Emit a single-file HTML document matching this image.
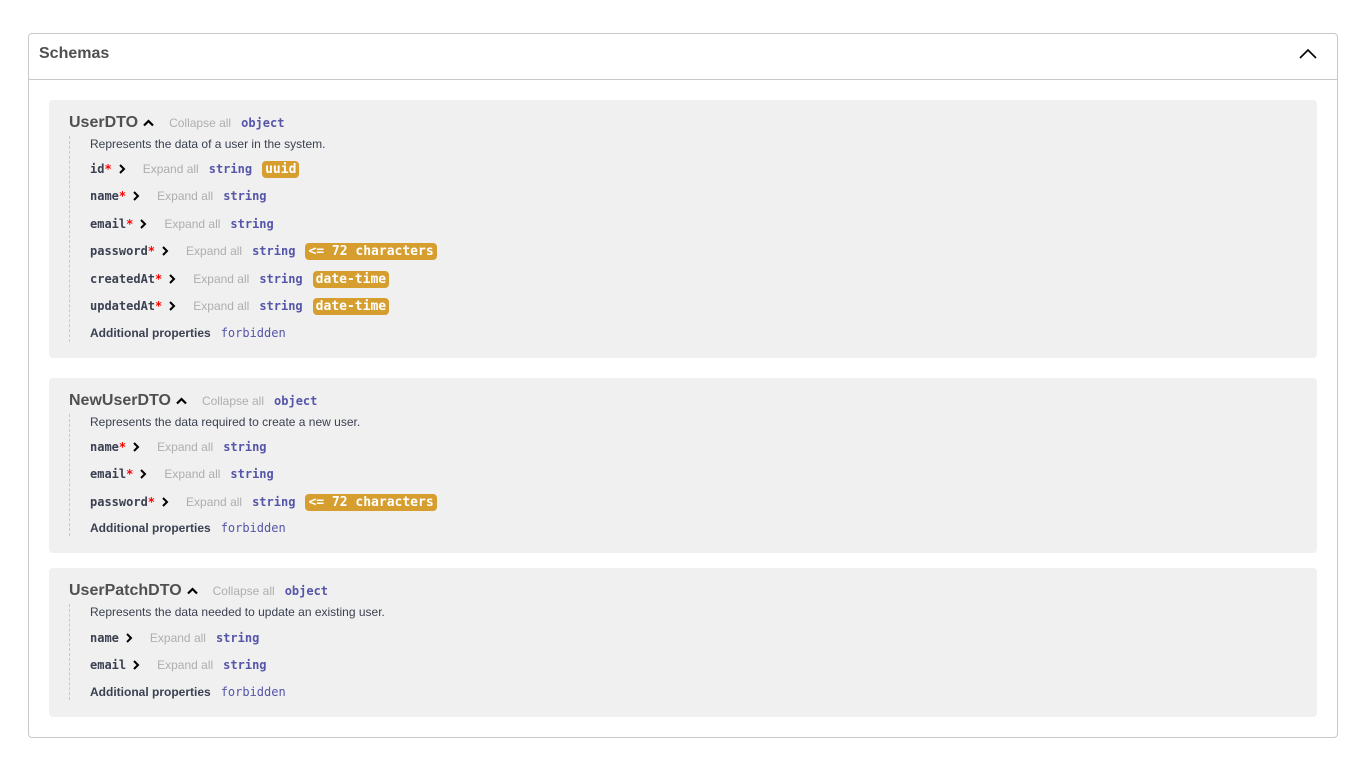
<!DOCTYPE html>
<html><head><meta charset="utf-8"><style>
body{margin:0;background:#fff;font-family:"Liberation Sans",sans-serif;}
.outer{position:absolute;left:28px;top:33px;width:1308px;height:703px;border:1px solid #c8c8c8;border-radius:4px;}
.hdr{position:absolute;left:0;top:0;width:100%;height:45px;border-bottom:1px solid #c8c8c8;}
.hdr .t{position:absolute;left:10px;top:11px;font-size:16px;font-weight:bold;color:#505050;}
.hdr svg{position:absolute;right:20px;top:14px;}
.box{position:absolute;left:20px;width:1268px;background:#f0f0f0;border-radius:4px;}
.dash{position:absolute;left:20px;border-left:1px dashed #c8c8c8;}
.row{position:absolute;left:41px;height:18px;line-height:18px;display:flex;align-items:center;white-space:nowrap;}
.title{left:20px;height:20px;line-height:20px;}
.title .n{font-size:16px;font-weight:bold;color:#505050;}
.m{font-family:"DejaVu Sans Mono",monospace;font-size:12px;font-weight:bold;color:#3b4151;}
.req{color:#f00;}
.ex{font-size:12px;color:#afaeae;margin-left:17px;}
.ty{font-family:"DejaVu Sans Mono",monospace;font-size:12px;font-weight:bold;color:#55a;margin-left:10px;}
.bd{font-family:"DejaVu Sans Mono",monospace;font-size:13px;font-weight:bold;color:#fff;background:#d69e2e;border-radius:4px;padding:0 3px;margin-left:10px;line-height:17px;}
.desc{font-size:12px;color:#3b4151;}
.ap{font-size:12px;font-weight:bold;color:#3b4151;}
.fb{font-family:"DejaVu Sans Mono",monospace;font-size:12px;color:#55a;margin-left:10px;}
.cr{margin-left:6px;}
.cu{margin-left:5px;}
.title .ex{margin-left:15px;}
</style></head><body>
<div class="outer">
<div class="hdr"><span class="t">Schemas</span><svg width="18" height="12" viewBox="0 0 18 12"><path d="M1 10 L9 2 L17 10" fill="none" stroke="#000" stroke-width="1.6"/></svg></div>

<div class="box" style="top:66px;height:258px;">
<div class="dash" style="top:36px;height:206px;"></div>
<div class="row title" style="top:13px;"><span class="n">UserDTO</span><svg class="cu" width="11" height="8" viewBox="0 0 11 8"><path d="M1 6.5 L5.5 2 L10 6.5" fill="none" stroke="#000" stroke-width="2.2"/></svg><span class="ex">Collapse all</span><span class="ty">object</span></div>
<div class="row" style="top:35px;"><span class="desc">Represents the data of a user in the system.</span></div>
<div class="row" style="top:60px;"><span class="m">id<span class="req">*</span></span><svg class="cr" width="8" height="10" viewBox="0 0 8 10"><path d="M2 1 L6 5 L2 9" fill="none" stroke="#000" stroke-width="2"/></svg><span class="ex">Expand all</span><span class="ty">string</span><span class="bd">uuid</span></div>
<div class="row" style="top:87px;"><span class="m">name<span class="req">*</span></span><svg class="cr" width="8" height="10" viewBox="0 0 8 10"><path d="M2 1 L6 5 L2 9" fill="none" stroke="#000" stroke-width="2"/></svg><span class="ex">Expand all</span><span class="ty">string</span></div>
<div class="row" style="top:115px;"><span class="m">email<span class="req">*</span></span><svg class="cr" width="8" height="10" viewBox="0 0 8 10"><path d="M2 1 L6 5 L2 9" fill="none" stroke="#000" stroke-width="2"/></svg><span class="ex">Expand all</span><span class="ty">string</span></div>
<div class="row" style="top:142px;"><span class="m">password<span class="req">*</span></span><svg class="cr" width="8" height="10" viewBox="0 0 8 10"><path d="M2 1 L6 5 L2 9" fill="none" stroke="#000" stroke-width="2"/></svg><span class="ex">Expand all</span><span class="ty">string</span><span class="bd">&lt;= 72 characters</span></div>
<div class="row" style="top:170px;"><span class="m">createdAt<span class="req">*</span></span><svg class="cr" width="8" height="10" viewBox="0 0 8 10"><path d="M2 1 L6 5 L2 9" fill="none" stroke="#000" stroke-width="2"/></svg><span class="ex">Expand all</span><span class="ty">string</span><span class="bd">date-time</span></div>
<div class="row" style="top:197px;"><span class="m">updatedAt<span class="req">*</span></span><svg class="cr" width="8" height="10" viewBox="0 0 8 10"><path d="M2 1 L6 5 L2 9" fill="none" stroke="#000" stroke-width="2"/></svg><span class="ex">Expand all</span><span class="ty">string</span><span class="bd">date-time</span></div>
<div class="row" style="top:224px;"><span class="ap">Additional properties</span><span class="fb">forbidden</span></div>
</div>

<div class="box" style="top:344px;height:175px;">
<div class="dash" style="top:36px;height:122px;"></div>
<div class="row title" style="top:13px;"><span class="n">NewUserDTO</span><svg class="cu" width="11" height="8" viewBox="0 0 11 8"><path d="M1 6.5 L5.5 2 L10 6.5" fill="none" stroke="#000" stroke-width="2.2"/></svg><span class="ex">Collapse all</span><span class="ty">object</span></div>
<div class="row" style="top:35px;"><span class="desc">Represents the data required to create a new user.</span></div>
<div class="row" style="top:60px;"><span class="m">name<span class="req">*</span></span><svg class="cr" width="8" height="10" viewBox="0 0 8 10"><path d="M2 1 L6 5 L2 9" fill="none" stroke="#000" stroke-width="2"/></svg><span class="ex">Expand all</span><span class="ty">string</span></div>
<div class="row" style="top:87px;"><span class="m">email<span class="req">*</span></span><svg class="cr" width="8" height="10" viewBox="0 0 8 10"><path d="M2 1 L6 5 L2 9" fill="none" stroke="#000" stroke-width="2"/></svg><span class="ex">Expand all</span><span class="ty">string</span></div>
<div class="row" style="top:115px;"><span class="m">password<span class="req">*</span></span><svg class="cr" width="8" height="10" viewBox="0 0 8 10"><path d="M2 1 L6 5 L2 9" fill="none" stroke="#000" stroke-width="2"/></svg><span class="ex">Expand all</span><span class="ty">string</span><span class="bd">&lt;= 72 characters</span></div>
<div class="row" style="top:141px;"><span class="ap">Additional properties</span><span class="fb">forbidden</span></div>
</div>

<div class="box" style="top:534px;height:149px;">
<div class="dash" style="top:36px;height:96px;"></div>
<div class="row title" style="top:13px;"><span class="n">UserPatchDTO</span><svg class="cu" width="11" height="8" viewBox="0 0 11 8"><path d="M1 6.5 L5.5 2 L10 6.5" fill="none" stroke="#000" stroke-width="2.2"/></svg><span class="ex">Collapse all</span><span class="ty">object</span></div>
<div class="row" style="top:35px;"><span class="desc">Represents the data needed to update an existing user.</span></div>
<div class="row" style="top:61px;"><span class="m">name</span><svg class="cr" width="8" height="10" viewBox="0 0 8 10"><path d="M2 1 L6 5 L2 9" fill="none" stroke="#000" stroke-width="2"/></svg><span class="ex">Expand all</span><span class="ty">string</span></div>
<div class="row" style="top:88px;"><span class="m">email</span><svg class="cr" width="8" height="10" viewBox="0 0 8 10"><path d="M2 1 L6 5 L2 9" fill="none" stroke="#000" stroke-width="2"/></svg><span class="ex">Expand all</span><span class="ty">string</span></div>
<div class="row" style="top:115px;"><span class="ap">Additional properties</span><span class="fb">forbidden</span></div>
</div>
</div>
</body></html>
